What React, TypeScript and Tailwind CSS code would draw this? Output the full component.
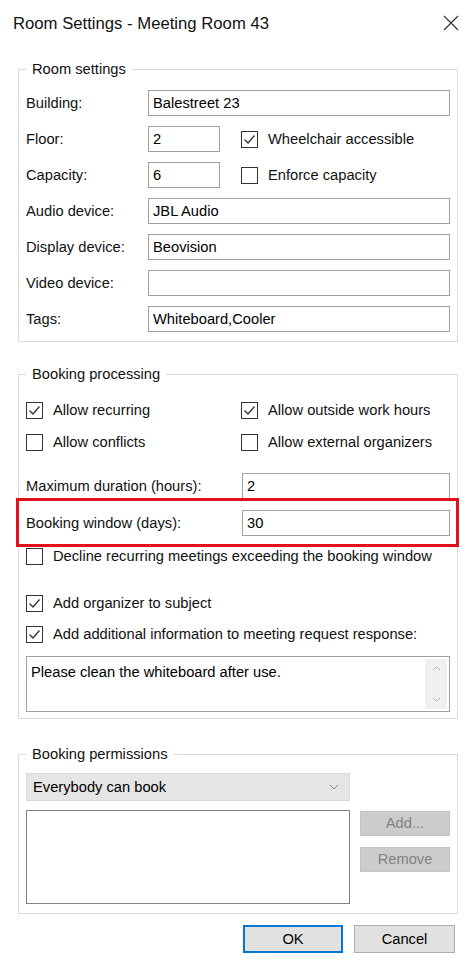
import React from 'react'

const font = { fontFamily: '"Liberation Sans", Arial, sans-serif' }

const Check = ({ checked, label }: { checked?: boolean; label: string }) => (
  <div className="flex items-center h-[22px]">
    <span className="w-[17px] h-[17px] border border-[#333] bg-white flex items-center justify-center shrink-0">
      {checked && (
        <svg width="13" height="13" viewBox="0 0 13 13">
          <path d="M1.5 6.5 L5 10 L11.5 2.5" fill="none" stroke="#333" strokeWidth="1.3" />
        </svg>
      )}
    </span>
    <span className="ml-[10px] text-[14.7px] text-[#111] whitespace-nowrap">{label}</span>
  </div>
)

const Input = ({ value, className = '' }: { value?: string; className?: string }) => (
  <div className={`h-[26px] border border-[#a0a0a0] bg-white flex items-center px-[4px] text-[14.7px] text-black ${className}`}>
    {value}
  </div>
)

const Row = ({ label, children }: { label: string; children: React.ReactNode }) => (
  <div className="flex items-center">
    <div className="w-[122px] text-[14.7px] text-[#111] shrink-0">{label}</div>
    {children}
  </div>
)

export default function App() {
  return (
    <div style={font} className="w-[474px] h-[974px] bg-white relative overflow-hidden">
      {/* title bar */}
      <div className="h-[59px] flex items-start justify-between pl-[13px] pr-[14px] pt-[11px]">
        <span className="text-[16.7px] text-[#111]">Room Settings - Meeting Room 43</span>
        <svg width="18" height="18" viewBox="0 0 18 18" className="mt-[3px]">
          <path d="M2 2 L16 16 M16 2 L2 16" stroke="#333" strokeWidth="1.2" />
        </svg>
      </div>

      <div className="pl-[18px] pr-[16px]">
        {/* Room settings */}
        <fieldset className="border border-[#dcdcdc] px-[7px] pb-[9px] pt-[11px]">
          <legend className="px-[6px] text-[14.7px] text-[#111] leading-[20px]">Room settings</legend>
          <div className="flex flex-col gap-[10px]">
            <Row label="Building:">
              <Input value="Balestreet 23" className="flex-1" />
            </Row>
            <Row label="Floor:">
              <Input value="2" className="w-[72px]" />
              <div className="ml-[21px]"><Check checked label="Wheelchair accessible" /></div>
            </Row>
            <Row label="Capacity:">
              <Input value="6" className="w-[72px]" />
              <div className="ml-[21px]"><Check label="Enforce capacity" /></div>
            </Row>
            <Row label="Audio device:">
              <Input value="JBL Audio" className="flex-1" />
            </Row>
            <Row label="Display device:">
              <Input value="Beovision" className="flex-1" />
            </Row>
            <Row label="Video device:">
              <Input className="flex-1" />
            </Row>
            <Row label="Tags:">
              <Input value="Whiteboard,Cooler" className="flex-1" />
            </Row>
          </div>
        </fieldset>

        {/* Booking processing */}
        <fieldset className="mt-[22px] border border-[#dcdcdc] px-[7px] pb-[6px] pt-[15px]">
          <legend className="px-[6px] text-[14.7px] text-[#111] leading-[20px]">Booking processing</legend>
          <div className="grid grid-cols-[215px_1fr] gap-y-[10px]">
            <Check checked label="Allow recurring" />
            <Check checked label="Allow outside work hours" />
            <Check label="Allow conflicts" />
            <Check label="Allow external organizers" />
          </div>
          <div className="flex items-center mt-[20px]">
            <div className="w-[216px] text-[14.7px] text-[#111] shrink-0">Maximum duration (hours):</div>
            <Input value="2" className="flex-1" />
          </div>
          <div className="relative flex items-center mt-[11px]">
            <div className="w-[216px] text-[14.7px] text-[#111] shrink-0">Booking window (days):</div>
            <Input value="30" className="flex-1" />
            <div className="absolute left-[-10px] right-[-9px] top-[-12px] bottom-[-11px] border-[3px] border-[#e0111b] pointer-events-none" />
          </div>
          <div className="mt-[9px]"><Check label="Decline recurring meetings exceeding the booking window" /></div>
          <div className="mt-[25px]"><Check checked label="Add organizer to subject" /></div>
          <div className="mt-[9px]"><Check checked label="Add additional information to meeting request response:" /></div>
          <div className="mt-[11px] h-[56px] border border-[#a0a0a0] flex">
            <div className="flex-1 px-[4px] pt-[4px] text-[14.7px] text-black">Please clean the whiteboard after use.</div>
            <div className="w-[22px] my-[2px] mr-[2px] bg-[#f0f0f0] flex flex-col justify-between items-center py-[6px]">
              <svg width="9" height="6" viewBox="0 0 9 6"><path d="M1 5 L4.5 1.5 L8 5" fill="none" stroke="#b5b5b5" strokeWidth="1" /></svg>
              <svg width="9" height="6" viewBox="0 0 9 6"><path d="M1 1 L4.5 4.5 L8 1" fill="none" stroke="#b5b5b5" strokeWidth="1" /></svg>
            </div>
          </div>
        </fieldset>

        {/* Booking permissions */}
        <fieldset className="mt-[25px] border border-[#dcdcdc] px-[7px] pb-[9px] pt-[9px]">
          <legend className="px-[6px] text-[14.7px] text-[#111] leading-[20px]">Booking permissions</legend>
          <div className="flex">
            <div className="w-[324px] flex flex-col gap-[9px]">
              <div className="h-[28px] bg-[#e5e5e5] border border-[#dadada] flex items-center justify-between px-[6px] text-[14.7px] text-black">
                <span>Everybody can book</span>
                <svg width="10" height="6" viewBox="0 0 10 6" className="mr-[4px]"><path d="M1 1 L5 5 L9 1" fill="none" stroke="#8a8a8a" strokeWidth="1" /></svg>
              </div>
              <div className="h-[94px] border border-[#828282] bg-white" />
            </div>
            <div className="flex-1 pl-[10px] pt-[38px] flex flex-col gap-[11px]">
              <div className="h-[25px] bg-[#cccccc] border border-[#c4c4c4] flex items-center justify-center text-[14.7px] text-[#838383]">Add...</div>
              <div className="h-[25px] bg-[#cccccc] border border-[#c4c4c4] flex items-center justify-center text-[14.7px] text-[#838383]">Remove</div>
            </div>
          </div>
        </fieldset>

        {/* buttons */}
        <div className="flex justify-end gap-[11px] mt-[11px] pr-[3px]">
          <div className="w-[100px] h-[28px] bg-[#e1e1e1] border-2 border-[#0078d7] flex items-center justify-center text-[14.7px] text-black">OK</div>
          <div className="w-[101px] h-[28px] bg-[#e1e1e1] border border-[#adadad] flex items-center justify-center text-[14.7px] text-black">Cancel</div>
        </div>
      </div>
    </div>
  )
}
